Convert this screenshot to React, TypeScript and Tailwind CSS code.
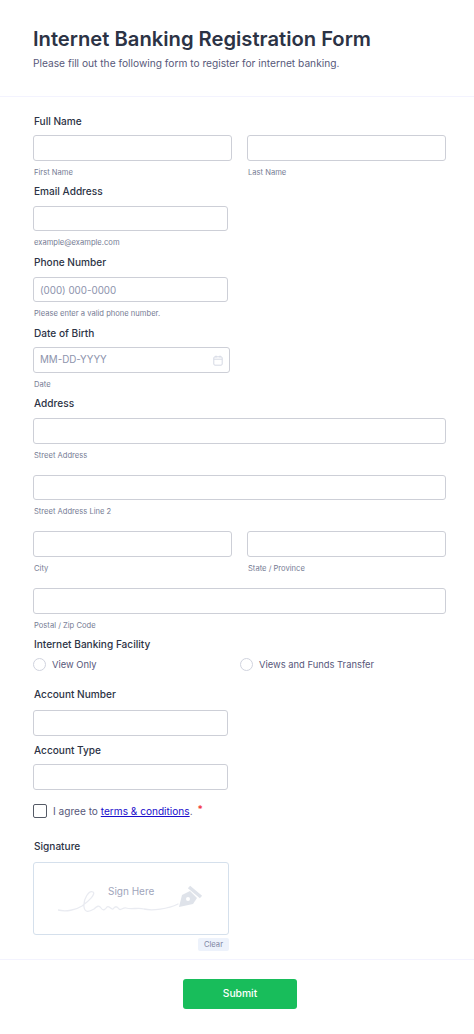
import { ReactNode } from 'react';

const inputClass = 'block h-[25.6px] rounded-[3px] border border-[#cdcfd7] bg-white';

const Label = ({ children }: { children: ReactNode }) => (
  <div className="ml-px h-4 text-[10.1px] font-medium leading-4 text-[#2c3345]">{children}</div>
);

const SubLabel = ({ children }: { children: ReactNode }) => (
  <div className="ml-px mt-[6px] h-3 text-[7.6px] leading-3 text-[#767c94]">{children}</div>
);

const Field = ({ label, sub, placeholder }: { label: string; sub: string; placeholder?: string }) => (
  <div className="pb-[4.4px]">
    <Label>{label}</Label>
    <div className={`${inputClass} mt-[6.8px] w-[195px] px-[6px] text-[9.8px] leading-[25px] text-[#8d93ac]`}>{placeholder}</div>
    <SubLabel>{sub}</SubLabel>
  </div>
);

const App = () => {
  return (
    <div className="h-[1034px] w-[474px] overflow-hidden bg-white font-['Inter',sans-serif]">
      <header className="h-[97px] border-b border-[#f3f3fe] px-[33px] pt-[26px]">
        <h1 className="h-[26px] text-[20.2px] font-semibold leading-[26px] text-[#2c3345]">Internet Banking Registration Form</h1>
        <p className="mt-[3px] text-[10.2px] leading-4 text-[#57587a]">Please fill out the following form to register for internet banking.</p>
      </header>

      <main className="px-[33px] pt-[16px]">
        <div className="pb-[4.4px]">
          <Label>Full Name</Label>
          <div className="mt-[6px] grid w-[413px] grid-cols-2 gap-x-[15px]">
            <div>
              <div className={inputClass} />
              <SubLabel>First Name</SubLabel>
            </div>
            <div>
              <div className={inputClass} />
              <SubLabel>Last Name</SubLabel>
            </div>
          </div>
        </div>

        <Field label="Email Address" sub="example@example.com" />
        <Field label="Phone Number" sub="Please enter a valid phone number." placeholder="(000) 000-0000" />

        <div className="pb-[4.4px]">
          <Label>Date of Birth</Label>
          <div className={`${inputClass} mt-[6.8px] flex w-[197px] items-center justify-between px-[6px] text-[9.8px] text-[#8d93ac]`}>
            <span className="pt-px">MM-DD-YYYY</span>
            <svg width="10" height="11" viewBox="0 0 10 11" fill="none" stroke="#d5d9e4" strokeWidth="1">
              <rect x="0.8" y="1.8" width="8.4" height="8.4" rx="1.2" />
              <path d="M0.8 4.2H9.2M3 0.6V2.6M7 0.6V2.6" />
            </svg>
          </div>
          <SubLabel>Date</SubLabel>
        </div>

        <div>
          <Label>Address</Label>
          <div className="mt-[6.8px] grid w-[413px] grid-cols-2 gap-x-[15px]">
            <div className="col-span-2 h-[56.6px]">
              <div className={inputClass} />
              <SubLabel>Street Address</SubLabel>
            </div>
            <div className="col-span-2 h-[56.6px]">
              <div className={inputClass} />
              <SubLabel>Street Address Line 2</SubLabel>
            </div>
            <div className="h-[56.6px]">
              <div className={inputClass} />
              <SubLabel>City</SubLabel>
            </div>
            <div className="h-[56.6px]">
              <div className={inputClass} />
              <SubLabel>State / Province</SubLabel>
            </div>
            <div className="col-span-2 h-[48px]">
              <div className={inputClass} />
              <SubLabel>Postal / Zip Code</SubLabel>
            </div>
          </div>
        </div>

        <div className="h-[50px]">
          <Label>Internet Banking Facility</Label>
          <div className="mt-[6px] flex h-3.5 items-center text-[9.4px] text-[#57587a]">
            <div className="flex w-[207px] items-center gap-[6px]">
              <span className="h-[13px] w-[13px] rounded-full border border-[#d0d3de]" />
              View Only
            </div>
            <div className="flex items-center gap-[6px]">
              <span className="h-[13px] w-[13px] rounded-full border border-[#d0d3de]" />
              Views and Funds Transfer
            </div>
          </div>
        </div>

        <div className="h-[56px]">
          <Label>Account Number</Label>
          <div className={`${inputClass} mt-[8px] w-[195px]`} />
        </div>
        <div className="h-[62.5px]">
          <Label>Account Type</Label>
          <div className={`${inputClass} mt-[6.5px] w-[195px]`} />
        </div>

        <div className="flex h-[14px] items-center text-[10.1px] text-[#57587a]">
          <span className="mr-[6px] h-[14px] w-[14px] rounded-[2px] border-[1.5px] border-[#555a66]" />
          <span>
            I agree to <a className="text-[#1a0dcc] underline">terms &amp; conditions</a>.
          </span>
          <span className="relative -top-[2px] ml-[5px] text-[10px] font-semibold text-[#f23a3c]">*</span>
        </div>

        <div className="mt-[20px]">
          <Label>Signature</Label>
          <div className="relative mt-[7.5px] h-[73px] w-[196px] rounded-[3px] border border-[#d5e0ec] bg-white">
            <span className="absolute left-[74px] top-[21px] text-[10px] text-[#a0a5bb]">Sign Here</span>
            <svg className="absolute left-[24px] top-[20px]" width="150" height="36" viewBox="0 0 150 36" fill="none">
              <path d="M0 27C8 29 18 27 24 23C31 18 38 11 35 9C31 7 25 16 26 24C27 30 31 29 36 26C39 23 41 22 43 25C45 28 47 27 49 24C51 22 53 27 55 26C57 23 59 23 61 26C63 28 65 24 68 25C74 27 80 24 86 26C94 28 110 26 120 21" stroke="#e9ebf1" strokeWidth="1.3" strokeLinecap="round" />
              <path d="M121 24L124 12L132 8L139 15L135 21Z" fill="#dfe3ea" />
              <circle cx="130" cy="16" r="2" fill="#fff" />
              <path d="M131 4L143 14" stroke="#dfe3ea" strokeWidth="3.5" />
            </svg>
          </div>
          <div className="mt-[3px] flex w-[196px] justify-end">
            <span className="flex h-[13px] w-[31px] items-center justify-center rounded-[2px] bg-[#edf2fb] text-[7.6px] text-[#7f86a3]">Clear</span>
          </div>
        </div>
      </main>

      <footer className="mt-[8px] flex justify-center border-t border-[#f3f3fe] pl-[6px] pt-[19px]">
        <button type="button" className="h-[30px] w-[114px] rounded-[3px] bg-[#18bd5b] text-[10.3px] font-medium text-white">Submit</button>
      </footer>
    </div>
  );
};

export default App;
